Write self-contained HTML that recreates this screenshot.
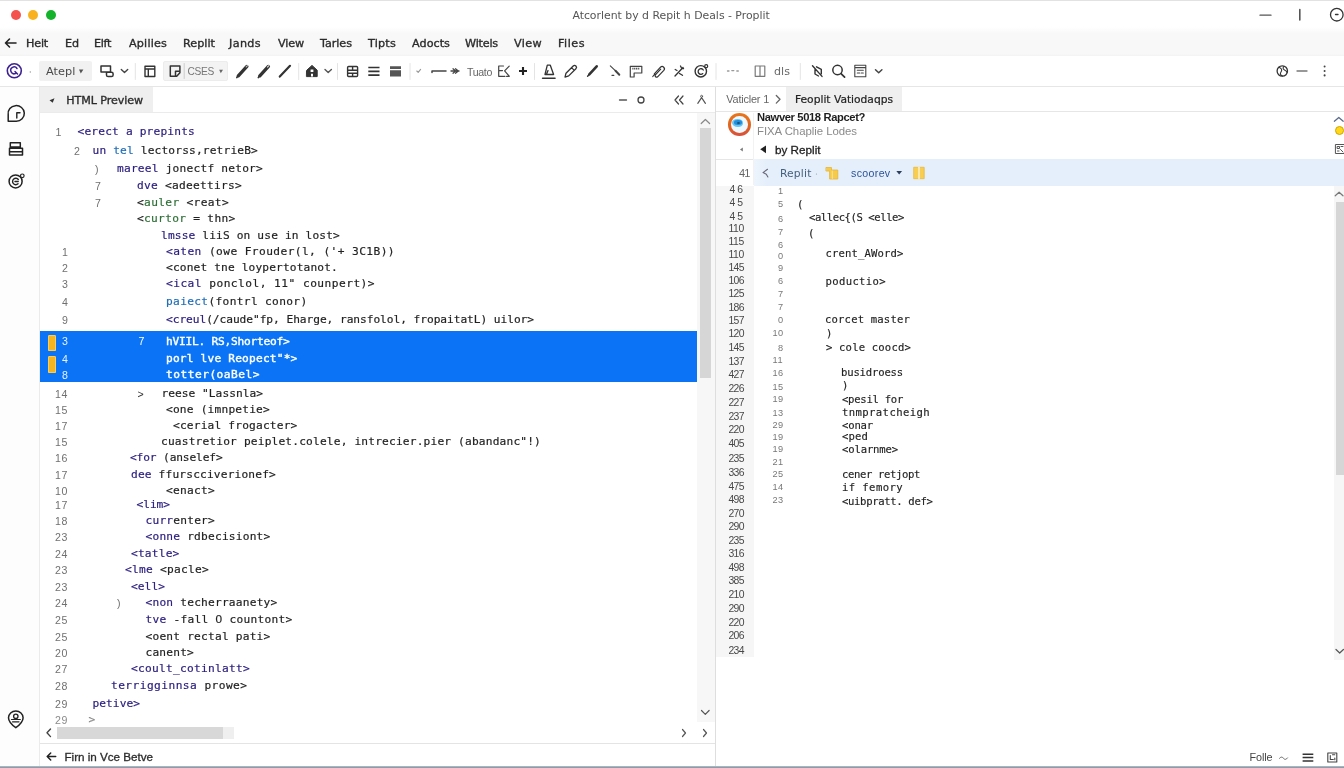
<!DOCTYPE html>
<html lang="en"><head><meta charset="utf-8"><title>Atcorlent by d Repit h Deals - Proplit</title>
<style>
*{box-sizing:border-box;margin:0;padding:0}
html,body{width:1344px;height:768px;overflow:hidden;background:#fff}
body{position:relative;font-family:"Liberation Sans","DejaVu Sans",sans-serif}
.a{position:absolute}
.t{position:absolute;white-space:pre;}
svg{position:absolute;overflow:visible}
.ic{fill:none;stroke:#333;stroke-width:1.4;stroke-linecap:round;stroke-linejoin:round}
</style></head><body>
<!-- title bar -->
<div class="a" style="left:0;top:0;width:1344px;height:30px;background:#fff"></div>
<div class="a" style="left:10.5px;top:10px;width:10px;height:10px;border-radius:50%;background:#f4524d"></div>
<div class="a" style="left:28px;top:10px;width:10px;height:10px;border-radius:50%;background:#f9b21d"></div>
<div class="a" style="left:46px;top:10px;width:10px;height:10px;border-radius:50%;background:#14b32c"></div>
<!-- menu bar -->
<div class="a" style="left:0;top:27px;width:1344px;height:29px;background:linear-gradient(#fff,#f8f8f8 22%,#f8f8f8 92%,#f3f3f3)"></div>
<div class="a" style="left:0;top:0;width:1344px;height:1px;background:#e2e2e2"></div>
<!-- toolbar -->
<div class="a" style="left:0;top:56px;width:1344px;height:31px;background:#fff;border-bottom:1px solid #e6e6e6"></div>
<div class="a" style="left:39px;top:61px;width:53px;height:20px;background:#f1f1f1;border-radius:2px"></div>
<div class="a" style="left:163px;top:61px;width:65px;height:20px;background:#f3f3f3;border:1px solid #ececec;border-radius:2px"></div>
<!-- sidebar -->
<div class="a" style="left:0;top:87px;width:40px;height:681px;background:#fdfdfd;border-right:1px solid #ebebeb"></div>
<!-- left tab bar -->
<div class="a" style="left:40px;top:87px;width:676px;height:26px;background:#fff;border-bottom:1px solid #ebebeb"></div>
<div class="a" style="left:40px;top:87px;width:113px;height:25px;background:#efefef"></div>
<!-- editor selection -->
<div class="a" style="left:40px;top:330.800px;width:656.700px;height:51px;background:#0b74f6"></div>
<div class="a" style="left:48.200px;top:334.600px;width:8.100px;height:16.700px;background:#f5b521;border-radius:1.500px;box-shadow:inset 0 0 0 0.800px #fbd56c"></div>
<div class="a" style="left:48.200px;top:355.800px;width:8.100px;height:17.400px;background:#f5b521;border-radius:1.500px;box-shadow:inset 0 0 0 0.800px #fbd56c"></div>
<!-- left v scrollbar -->
<div class="a" style="left:696.500px;top:113px;width:18.500px;height:609px;background:#f7f7f7"></div>
<div class="a" style="left:700px;top:128px;width:10.5px;height:250px;background:#d6d6d6"></div>
<!-- left h scrollbar -->
<div class="a" style="left:40px;top:723px;width:675px;height:21px;background:#fff;border-bottom:1px solid #e4e4e4"></div>
<div class="a" style="left:57px;top:727px;width:177px;height:12px;background:#efefef"></div>
<div class="a" style="left:57px;top:727px;width:166px;height:12px;background:#d8d8d8"></div>
<!-- divider -->
<div class="a" style="left:715px;top:87px;width:1px;height:679px;background:#dedede"></div>
<!-- right tab bar -->
<div class="a" style="left:716px;top:87px;width:628px;height:25px;background:#fff;border-bottom:1px solid #e6e6e6"></div>
<div class="a" style="left:786px;top:87px;width:116px;height:24px;background:#efefef"></div>
<!-- right header -->
<div class="a" style="left:716px;top:159px;width:38px;height:1px;background:#e6e6e6"></div>
<div class="a" style="left:754px;top:159.300px;width:590px;height:26.400px;background:linear-gradient(90deg,#edf4fc,#e5effb 12px)"></div>
<div class="a" style="left:716px;top:185.700px;width:38px;height:471px;background:#f6f6f6"></div>
<div class="a" style="left:753px;top:113px;width:1px;height:72px;background:#f2f2f2"></div>
<!-- avatar -->
<div class="a" style="left:728px;top:113px;width:22.600px;height:22.600px;border-radius:50%;background:linear-gradient(#e9781c,#e0651f 55%,#d84f3c)"></div>
<div class="a" style="left:731px;top:116px;width:16.600px;height:16.600px;border-radius:50%;background:#eef8fd"></div>
<div class="a" style="left:732px;top:118.500px;width:11px;height:8px;border-radius:50% 50% 45% 55%;background:#6cc3ef"></div>
<div class="a" style="left:733.500px;top:120px;width:8.500px;height:5px;border-radius:45%;background:#1f8edb"></div>
<div class="a" style="left:736.500px;top:121.500px;width:3.500px;height:2.500px;border-radius:40%;background:#1b4f78"></div>
<!-- right scrollbar -->
<div class="a" style="left:1334px;top:186px;width:10px;height:474px;background:#f6f6f6"></div>
<div class="a" style="left:1335.5px;top:202px;width:9px;height:273px;background:#d6d6d6"></div>
<div class="a" style="left:1334.6px;top:126.1px;width:9.3px;height:9.3px;border-radius:50%;background:#ffd81c;border:1px solid #d0a600"></div>
<!-- bottom edge -->
<div class="a" style="left:0;top:766px;width:1344px;height:2px;background:linear-gradient(#b4c2cc,#7f919f)"></div>
<svg class="ic" style="left:0;top:0" width="1344" height="768" viewBox="0 0 1344 768">
<!-- window controls -->
<g stroke="#555" stroke-width="1.3">
<path d="M1260 15.2H1271"/><path d="M1299.8 9.5V20" stroke-width="1.6"/>
<circle cx="1336.8" cy="14.7" r="6.3" stroke="#333"/><path d="M1335.5 14.5h2.5" stroke="#333"/>
</g>
<!-- menu back arrow -->
<path d="M5.5 43H16M9.5 39L5.5 43L9.5 47" stroke="#222" stroke-width="1.6"/>
<!-- toolbar: purple circle -->
<circle cx="14.3" cy="70.8" r="7" stroke="#3d2391" stroke-width="1.6"/>
<path d="M17 68.5a3.4 3.4 0 1 0 -1.5 5M15 71.5l2.5 2.5" stroke="#3d2391" stroke-width="1.5"/>
<circle cx="30.3" cy="72" r="0.7" fill="#999" stroke="none"/>
<!-- Atepl caret -->
<path d="M79 69.5h4.4l-2.6 4z" fill="#555" stroke="none"/>
<!-- overlapping shapes icon -->
<path d="M101 66h9.5v6H101z M106.5 72.2h5a1.6 1.6 0 0 1 1.6 1.6v1.2a1.6 1.6 0 0 1 -1.6 1.6h-3.4a1.6 1.6 0 0 1 -1.6 -1.6z" stroke="#333" stroke-width="1.5"/>
<path d="M121.3 69.6l3.2 3l3.2-3" stroke="#444" stroke-width="1.4"/>
<path d="M135.3 63.5v16" stroke="#e4e4e4" stroke-width="1"/>
<!-- window icon -->
<path d="M145 66.3h9.8v10.2H145z M145 69h9.8 M148.3 69v7.5" stroke="#333" stroke-width="1.4"/>
<!-- CSES icon -->
<path d="M170.3 66h9.6v6.8l-3.2 3.4h-6.4z M179.9 71.3h-4.4v4.9" stroke="#333" stroke-width="1.5"/>
<path d="M184.2 63.5v15" stroke="#ccc" stroke-width="1"/>
<path d="M219.2 69.7h3.8l-2.2 3.6z" fill="#666" stroke="none"/>
<!-- pens -->
<path d="M238.3 75.8l8.6-9.4" stroke="#333" stroke-width="3.3"/><path d="M236.8 77.6l1-1.6" stroke="#333" stroke-width="1.6"/>
<path d="M246.2 66.9l1.3-1.3" stroke="#bbb" stroke-width="1.2"/>
<path d="M259.8 75.8l8.6-9.4" stroke="#333" stroke-width="3.3"/><path d="M258.3 77.6l1-1.6" stroke="#333" stroke-width="1.6"/>
<path d="M267.5 67l1.4-1.4" stroke="#ccc" stroke-width="1.2"/>
<path d="M279.8 76.6l10.2-10.8" stroke="#333" stroke-width="2.2"/>
<path d="M298.7 63.5v16" stroke="#e4e4e4" stroke-width="1"/>
<!-- house -->
<path d="M306.8 70.2l5.2-4.8l5.2 4.800v6.4h-10.4z" fill="#333" stroke="#333" stroke-width="1"/>
<path d="M310.6 69.5h2.8v2.4h-2.800z M311 73.800h2v2.800h-2z" fill="#fff" stroke="none"/>
<path d="M325 69.600l3.200 3l3.200-3" stroke="#555" stroke-width="1.400"/>
<path d="M337.500 63.500v16" stroke="#e4e4e4" stroke-width="1"/>
<!-- save-like icon -->
<path d="M347.600 67.500a1 1 0 0 1 1-1h8a1 1 0 0 1 1 1v8a1 1 0 0 1 -1 1h-8a1 1 0 0 1 -1-1z M347.600 70.200h10 M347.600 73.300h10 M352.600 66.500v3.700 M352.600 73.300v3.200" stroke="#333" stroke-width="1.400"/>
<!-- lines icon -->
<path d="M368.300 67.500h11.200 M368.300 71.300h11.200 M368.300 75.200h11.200" stroke="#333" stroke-width="1.700" stroke-linecap="butt"/>
<!-- filled rect icon -->
<path d="M390 66.300h11v2.600h-11z M390 70.300h11v6.200h-11z" fill="#555" stroke="none"/>
<path d="M410 63.500v16" stroke="#e4e4e4" stroke-width="1"/>
<path d="M416.800 71l1.400 1.400l2.400-3" stroke="#999" stroke-width="1.100"/>
<path d="M432 72.500v-1.500h14" stroke="#444" stroke-width="1.500"/>
<path d="M451 71h8 M455.500 68.800l2.800 2.200l-2.800 2.200 M453 68.800l2.800 2.200l-2.800 2.200" stroke="#444" stroke-width="1.300"/>
<!-- E< icon -->
<path d="M503.500 66h-4.800v10.300h4.200 M498.700 70.600h3.800 M509.200 66.200l-4.600 4.600l4.600 5.400 M503.500 76.300h1.500 M506.500 76.300h2.800" stroke="#444" stroke-width="1.200"/>
<!-- plus -->
<path d="M519 71h8 M523 67v8" stroke="#222" stroke-width="2.100" stroke-linecap="butt"/>
<path d="M534.500 63.500v16" stroke="#e4e4e4" stroke-width="1"/>
<!-- highlighter A -->
<path d="M547.300 65.200h3l3.300 9.300h-8.600z M548 70.500l-1.600 4" stroke="#333" stroke-width="1.300"/>
<path d="M542.600 78.200h12.400" stroke="#333" stroke-width="1.600"/>
<!-- outline pencil -->
<path d="M566 73.200l7.200-7.200a1.900 1.900 0 0 1 2.700 2.700l-7.200 7.200l-3.700 1.200z M571.500 67.600l2.800 2.800" stroke="#333" stroke-width="1.300"/>
<!-- brush -->
<path d="M589.300 74.300l7.400-8" stroke="#333" stroke-width="2.600"/><path d="M587.600 76.300l1.400-1.600" stroke="#333" stroke-width="1.400"/>
<!-- thin diag -->
<path d="M610.300 65.800l5.500 5.300" stroke="#444" stroke-width="1.100"/><path d="M615.500 70.800l3.800 4" stroke="#444" stroke-width="2"/>
<path d="M612 75.300h1.800" stroke="#444" stroke-width="1.300"/>
<!-- flag -->
<path d="M630.300 77v-10.700h11.500v6.700h-7.700v4z" stroke="#444" stroke-width="1.200"/>
<path d="M632.300 68.700h7.500" stroke="#555" stroke-width="1.800" stroke-dasharray="1.200 0.600" stroke-linecap="butt"/>
<!-- clip -->
<path d="M654.300 73.800l6.200-6.600a2.300 2.300 0 0 1 3.300 3.200l-6.200 6.400a1.500 1.500 0 0 1 -2.200-2l5.300-5.600 M652.800 76.500l2-2.500" stroke="#333" stroke-width="1.200"/>
<!-- wand -->
<path d="M675 76l8-8.500 M680.500 66l1 2l2 0.500 M677 70.500l-1.800-1 M679.500 73.500l3 1.800" stroke="#333" stroke-width="1.300"/>
<!-- @ spiral -->
<circle cx="700.800" cy="71.300" r="5.700" stroke="#333" stroke-width="1.400"/>
<path d="M703.300 70a2.800 2.800 0 1 0 -0.500 3.600" stroke="#333" stroke-width="1.300"/>
<circle cx="706.200" cy="66.200" r="1.500" stroke="#333" stroke-width="1.200"/>
<path d="M716 63.500v16" stroke="#e4e4e4" stroke-width="1"/>
<!-- dots -->
<path d="M727.500 71h1.500 M731.800 70.600h2 M736.800 71h1.500" stroke="#999" stroke-width="1.300"/>
<!-- [] icon -->
<path d="M755.200 66h9.600v10.300h-9.600z M760 66v10.300" stroke="#7a7a7a" stroke-width="1.200"/>
<path d="M800.300 63.500v16" stroke="#e4e4e4" stroke-width="1"/>
<!-- crossed icon -->
<path d="M812.500 65.800l9.500 10.600 M815 69.500v4.500l3.500 2 M816.500 66.800l4.800 2.500v4.500" stroke="#333" stroke-width="1.400"/>
<!-- search -->
<circle cx="837.500" cy="70" r="4.700" stroke="#333" stroke-width="1.500"/><path d="M841 73.600l3.600 3.600" stroke="#333" stroke-width="1.700"/>
<!-- box icon -->
<path d="M854.800 65.300h11v11.400h-11z M854.800 67.600h11 M857.300 70.300h6 M857.300 73h2.500 M861.300 73h2" stroke="#444" stroke-width="1.100"/>
<path d="M875.500 69.800l3.200 3l3.200-3" stroke="#444" stroke-width="1.500"/>
<!-- toolbar right -->
<circle cx="1282.300" cy="71" r="5.200" stroke="#333" stroke-width="1.300"/>
<path d="M1279.500 67.500c2 1 3 2.500 1.500 4.500s0 3.500 1.500 4 M1284 66.300c-1.500 1.500-1 3 0.500 3.700s2.500 1.500 2.500 2.500" stroke="#333" stroke-width="1.100"/>
<path d="M1297 71h10" stroke="#777" stroke-width="1.300"/>
<path d="M1324.600 66.500v0.100 M1324.600 71v0.100 M1324.600 75.300v0.100" stroke="#444" stroke-width="2"/>
<!-- sidebar icons -->
<path d="M8.2 121.2v-6.7a8.1 7.8 0 1 1 8.1 6.7z" stroke="#222" stroke-width="1.5"/>
<path d="M16.800 118v-5.300h3.200" stroke="#222" stroke-width="1.400"/>
<path d="M10.300 142.700h10v4.300h-10z M9.500 148.300h13v6.800h-13z M9.500 151.700h13" stroke="#222" stroke-width="1.500"/>
<circle cx="15.600" cy="181.400" r="6.500" stroke="#222" stroke-width="1.500"/>
<path d="M18.300 179.500a3.200 3.200 0 1 0 -0.300 4.300 M15 181.500h3.200" stroke="#222" stroke-width="1.400"/>
<circle cx="22.300" cy="175.800" r="1.800" stroke="#222" stroke-width="1.200" fill="#fdfdfd"/>
<!-- pin icon -->
<path d="M15.800 727.700c-4.500-3.300-7.300-6.300-7.300-10a7.300 6.700 0 0 1 14.600 0c0 3.700-2.800 6.700-7.300 10z" stroke="#222" stroke-width="1.500"/>
<circle cx="15.800" cy="716.300" r="2.200" stroke="#222" stroke-width="1.300"/>
<path d="M11.500 719.500h8.800 M12.500 721.800h6.500" stroke="#222" stroke-width="1.200"/>
<!-- tab arrow -->
<path d="M49.500 100.200l5-2l-1.800 4.600z" fill="#333" stroke="none"/>
<!-- left tab bar controls -->
<path d="M619.500 100h7" stroke="#555" stroke-width="1.300"/>
<circle cx="641" cy="100" r="3" stroke="#444" stroke-width="1.300"/>
<path d="M678.500 96l-3.500 4l3.500 4 M683 96l-3.500 4l3.500 4" stroke="#444" stroke-width="1.200"/>
<path d="M697.8 103.300l3.800-5.600l3.800 5.600" stroke="#555" stroke-width="1.200"/><circle cx="701.600" cy="96.300" r="1" stroke="#555" stroke-width="0.900"/>
<!-- left scroll arrows -->
<path d="M701.200 123.500l4.200-4l4.200 4" stroke="#888" stroke-width="1.200"/>
<path d="M701.500 710.500l3.800 3.800l3.800-3.800" stroke="#555" stroke-width="1.200"/>
<path d="M50.500 729l-3.500 3.800l3.500 3.800" stroke="#444" stroke-width="1.400"/>
<path d="M682.500 729.500l3 3.500l-3 3.500" stroke="#555" stroke-width="1.200"/>
<path d="M703.500 729.500l3 3.500l-3 3.500" stroke="#555" stroke-width="1.200"/>
<!-- status arrow -->
<path d="M47.200 756.500h8.500 M50.700 753l-3.500 3.500l3.500 3.500" stroke="#222" stroke-width="1.500"/>
<!-- right tab chevron -->
<path d="M776.300 95.500l3.700 3.800l-3.700 3.800" stroke="#666" stroke-width="1.300"/>
<!-- by replit arrows -->
<path d="M766 145.400v7.800l-5.800-3.900z" fill="#222" stroke="none"/>
<path d="M742.800 147.600v3.800l-2.800-1.900z" fill="#777" stroke="none"/>
<!-- blue row -->
<path d="M767.5 169.300l-4.500 3.300l3.300 1.600l1.600 2.800" stroke="#667" stroke-width="1.100"/>
<circle cx="816.500" cy="174" r="0.600" fill="#99a" stroke="none"/>
<path d="M826.300 167.500h5.200v2.500h6.300v9h-8.200v-8h-3.300z" fill="#f6cb4c" stroke="#e6b535" stroke-width="0.800"/><path d="M832.300 171v7.500" stroke="#fbe39a" stroke-width="1"/>
<path d="M896.300 171h5.800l-2.900 3.400z" fill="#2b3f60" stroke="none"/>
<path d="M914 167.300h10.200v11.400h-10.200z" fill="#f7cd52" stroke="#e8b93a" stroke-width="0.800"/>
<path d="M919 167.300v11.400" stroke="#fff4d0" stroke-width="1.400"/>
<!-- right side -->
<path d="M1334.400 121.200l4.400-3.700l4.400 3.700" stroke="#5a6b8a" stroke-width="1.300"/>
<path d="M1335.800 144.500h9v9h-9z M1337.500 146.500h2v2h-2z M1341 146.500h2 M1337.500 151h1.500 M1340.500 149.500l2.500 2.500" stroke="#555" stroke-width="1"/>
<path d="M1335.200 195.800l3.900-3.600l3.900 3.600" stroke="#777" stroke-width="1.200"/>
<path d="M1336 649.500l3.700 3.500l3.700-3.500" stroke="#555" stroke-width="1.200"/>
<!-- status right -->
<path d="M1279.500 758.300c1.300-1.600 2.600-1.600 4 0s2.700 1.400 4-0.400" stroke="#666" stroke-width="1"/>
<path d="M1302.600 754.200h10.700 M1302.600 757.600h10.700 M1302.600 761h10.700" stroke="#333" stroke-width="1.500" stroke-linecap="butt"/>
<path d="M1327.800 753h9v9h-9z M1330.300 755.500v4h3 M1332.500 754.800h2.300 M1334.800 758v1.800" stroke="#444" stroke-width="1.100"/>
</svg>

<div class="a" style="left:0;top:0;width:1344px;height:768px;will-change:transform">
<div class="t" id="t0" style="left:572.4px;top:7.9px;font:400 10.9px/16px 'DejaVu Sans','Liberation Sans',sans-serif;color:#555;letter-spacing:-0.012px;">Atcorlent by d Repit h Deals - Proplit</div>
<div class="t" id="t1" style="left:26.0px;top:35.9px;font:400 11.2px/16px 'DejaVu Sans','Liberation Sans',sans-serif;color:#2b2b2b;letter-spacing:-0.199px;-webkit-text-stroke:0.35px #2b2b2b;">Heit</div>
<div class="t" id="t2" style="left:65.0px;top:35.9px;font:400 11.2px/16px 'DejaVu Sans','Liberation Sans',sans-serif;color:#2b2b2b;letter-spacing:-0.086px;-webkit-text-stroke:0.35px #2b2b2b;">Ed</div>
<div class="t" id="t3" style="left:94.0px;top:35.9px;font:400 11.2px/16px 'DejaVu Sans','Liberation Sans',sans-serif;color:#2b2b2b;letter-spacing:-0.328px;-webkit-text-stroke:0.35px #2b2b2b;">Elft</div>
<div class="t" id="t4" style="left:129.0px;top:35.9px;font:400 11.2px/16px 'DejaVu Sans','Liberation Sans',sans-serif;color:#2b2b2b;letter-spacing:0.172px;-webkit-text-stroke:0.35px #2b2b2b;">Apilies</div>
<div class="t" id="t5" style="left:183.0px;top:35.9px;font:400 11.2px/16px 'DejaVu Sans','Liberation Sans',sans-serif;color:#2b2b2b;letter-spacing:0.023px;-webkit-text-stroke:0.35px #2b2b2b;">Replit</div>
<div class="t" id="t6" style="left:229.0px;top:35.9px;font:400 11.2px/16px 'DejaVu Sans','Liberation Sans',sans-serif;color:#2b2b2b;letter-spacing:0.362px;-webkit-text-stroke:0.35px #2b2b2b;">Jands</div>
<div class="t" id="t7" style="left:278.0px;top:35.9px;font:400 11.2px/16px 'DejaVu Sans','Liberation Sans',sans-serif;color:#2b2b2b;letter-spacing:-0.141px;-webkit-text-stroke:0.35px #2b2b2b;">View</div>
<div class="t" id="t8" style="left:320.0px;top:35.9px;font:400 11.2px/16px 'DejaVu Sans','Liberation Sans',sans-serif;color:#2b2b2b;letter-spacing:-0.044px;-webkit-text-stroke:0.35px #2b2b2b;">Tarles</div>
<div class="t" id="t9" style="left:368.0px;top:35.9px;font:400 11.2px/16px 'DejaVu Sans','Liberation Sans',sans-serif;color:#2b2b2b;letter-spacing:0.216px;-webkit-text-stroke:0.35px #2b2b2b;">Tipts</div>
<div class="t" id="t10" style="left:412.0px;top:35.9px;font:400 11.2px/16px 'DejaVu Sans','Liberation Sans',sans-serif;color:#2b2b2b;letter-spacing:0.036px;-webkit-text-stroke:0.35px #2b2b2b;">Adocts</div>
<div class="t" id="t11" style="left:465.0px;top:35.9px;font:400 11.2px/16px 'DejaVu Sans','Liberation Sans',sans-serif;color:#2b2b2b;letter-spacing:-0.190px;-webkit-text-stroke:0.35px #2b2b2b;">Witels</div>
<div class="t" id="t12" style="left:514.0px;top:35.9px;font:400 11.2px/16px 'DejaVu Sans','Liberation Sans',sans-serif;color:#2b2b2b;letter-spacing:0.359px;-webkit-text-stroke:0.35px #2b2b2b;">View</div>
<div class="t" id="t13" style="left:558.0px;top:35.9px;font:400 11.2px/16px 'DejaVu Sans','Liberation Sans',sans-serif;color:#2b2b2b;letter-spacing:0.487px;-webkit-text-stroke:0.35px #2b2b2b;">Files</div>
<div class="t" id="t14" style="left:46.0px;top:63.5px;font:400 11.3px/16px 'DejaVu Sans','Liberation Sans',sans-serif;color:#4a4a4a;letter-spacing:0.056px;">Atepl</div>
<div class="t" id="t15" style="left:187.5px;top:63.9px;font:400 10.2px/16px 'Liberation Sans','DejaVu Sans',sans-serif;color:#777;letter-spacing:-0.312px;">CSES</div>
<div class="t" id="t16" style="left:467.0px;top:63.7px;font:400 10.6px/16px 'Liberation Sans','DejaVu Sans',sans-serif;color:#666;letter-spacing:-0.341px;">Tuato</div>
<div class="t" id="t17" style="left:774.0px;top:63.5px;font:400 11.1px/16px 'DejaVu Sans','Liberation Sans',sans-serif;color:#6a6a6a;letter-spacing:0.031px;">dls</div>
<div class="t" id="t18" style="left:66.2px;top:92.7px;font:400 11.1px/16px 'DejaVu Sans','Liberation Sans',sans-serif;color:#2b2b2b;letter-spacing:-0.066px;-webkit-text-stroke:0.35px #2b2b2b;">HTML Preview</div>
<div class="t" id="t19" style="left:726.3px;top:90.9px;font:400 10.9px/16px 'Liberation Sans','DejaVu Sans',sans-serif;color:#666;letter-spacing:-0.189px;">Vaticler 1</div>
<div class="t" id="t20" style="left:795.0px;top:91.5px;font:400 10.7px/16px 'DejaVu Sans','Liberation Sans',sans-serif;color:#222;letter-spacing:-0.010px;-webkit-text-stroke:0.2px;">Feoplit Vatiodaqps</div>
<div class="t" id="t21" style="left:757.0px;top:109.3px;font:700 11.2px/16px 'Liberation Sans','DejaVu Sans',sans-serif;color:#1d1d1d;letter-spacing:-0.371px;">Nawver 5018 Rapcet?</div>
<div class="t" id="t22" style="left:757.0px;top:123.1px;font:400 11.4px/16px 'Liberation Sans','DejaVu Sans',sans-serif;color:#8a8a8a;letter-spacing:-0.038px;">FIXA Chaplie Lodes</div>
<div class="t" id="t23" style="left:775.0px;top:142.4px;font:400 11.7px/16px 'Liberation Sans','DejaVu Sans',sans-serif;color:#222;letter-spacing:0.002px;-webkit-text-stroke:0.3px;">by Replit</div>
<div class="t" id="t24" style="left:739.0px;top:165.2px;font:400 11px/16px 'Liberation Sans','DejaVu Sans',sans-serif;color:#666;letter-spacing:-0.875px;">41</div>
<div class="t" id="t25" style="left:780.0px;top:165.5px;font:400 10.7px/16px 'DejaVu Sans','Liberation Sans',sans-serif;color:#44607f;letter-spacing:0.177px;">Replit</div>
<div class="t" id="t26" style="left:851.0px;top:165.1px;font:400 10.6px/16px 'Liberation Sans','DejaVu Sans',sans-serif;color:#2b5299;letter-spacing:0.344px;">scoorev</div>
<div class="t" id="t27" style="left:64.5px;top:749.1px;font:400 11.7px/16px 'Liberation Sans','DejaVu Sans',sans-serif;color:#2b2b2b;letter-spacing:-0.029px;-webkit-text-stroke:0.3px;">Firn in Vce Betve</div>
<div class="t" id="t28" style="left:1249.5px;top:749.3px;font:400 10.8px/16px 'Liberation Sans','DejaVu Sans',sans-serif;color:#444;letter-spacing:-0.081px;">Folle</div>
<div class="t" id="t29" style="left:55.5px;top:124.2px;font:400 10.6px/16px 'Liberation Sans','DejaVu Sans',sans-serif;color:#707070;letter-spacing:0.000px;">1</div>
<div class="t" id="t30" style="left:77.5px;top:124.2px;font:400 11.2px/16px 'DejaVu Sans Mono','Liberation Mono',monospace;color:#222;letter-spacing:0.176px;-webkit-text-stroke:0.18px;"><span style="color:#2d2080">&lt;erect a prepints</span></div>
<div class="t" id="t31" style="left:74.0px;top:142.7px;font:400 10.6px/16px 'Liberation Sans','DejaVu Sans',sans-serif;color:#707070;letter-spacing:0.000px;">2</div>
<div class="t" id="t32" style="left:92.5px;top:142.7px;font:400 11.2px/16px 'DejaVu Sans Mono','Liberation Mono',monospace;color:#222;letter-spacing:0.159px;-webkit-text-stroke:0.18px;"><span style="color:#2d2080">un </span><span style="color:#1f6eb8">tel</span><span style="color:#222"> lectorss,retrieB&gt;</span></div>
<div class="t" id="t33" style="left:95.0px;top:160.7px;font:400 10.6px/16px 'Liberation Sans','DejaVu Sans',sans-serif;color:#707070;letter-spacing:0.000px;">)</div>
<div class="t" id="t34" style="left:117.0px;top:160.7px;font:400 11.2px/16px 'DejaVu Sans Mono','Liberation Mono',monospace;color:#222;letter-spacing:0.217px;-webkit-text-stroke:0.18px;"><span style="color:#2d2080">mareel </span><span style="color:#222">jonectf netor&gt;</span></div>
<div class="t" id="t35" style="left:95.0px;top:177.7px;font:400 10.6px/16px 'Liberation Sans','DejaVu Sans',sans-serif;color:#707070;letter-spacing:0.000px;">7</div>
<div class="t" id="t36" style="left:137.0px;top:177.7px;font:400 11.2px/16px 'DejaVu Sans Mono','Liberation Mono',monospace;color:#222;letter-spacing:0.264px;-webkit-text-stroke:0.18px;"><span style="color:#2d2080">dve</span><span style="color:#222"> &lt;adeettirs&gt;</span></div>
<div class="t" id="t37" style="left:95.0px;top:194.7px;font:400 10.6px/16px 'Liberation Sans','DejaVu Sans',sans-serif;color:#707070;letter-spacing:0.000px;">7</div>
<div class="t" id="t38" style="left:137.0px;top:194.7px;font:400 11.2px/16px 'DejaVu Sans Mono','Liberation Mono',monospace;color:#222;letter-spacing:0.339px;-webkit-text-stroke:0.18px;"><span style="color:#222">&lt;</span><span style="color:#2f7038">auler</span><span style="color:#222"> &lt;reat&gt;</span></div>
<div class="t" id="t39" style="left:137.0px;top:210.7px;font:400 11.2px/16px 'DejaVu Sans Mono','Liberation Mono',monospace;color:#222;letter-spacing:0.298px;-webkit-text-stroke:0.18px;"><span style="color:#222">&lt;</span><span style="color:#2f7038">curtor</span><span style="color:#222"> = thn&gt;</span></div>
<div class="t" id="t40" style="left:161.0px;top:227.7px;font:400 11.2px/16px 'DejaVu Sans Mono','Liberation Mono',monospace;color:#222;letter-spacing:0.148px;-webkit-text-stroke:0.18px;"><span style="color:#2d2080">lmsse</span><span style="color:#222"> liiS on use in lost&gt;</span></div>
<div class="t" id="t41" style="left:62.0px;top:243.7px;font:400 10.6px/16px 'Liberation Sans','DejaVu Sans',sans-serif;color:#707070;letter-spacing:0.000px;">1</div>
<div class="t" id="t42" style="left:166.0px;top:243.7px;font:400 11.2px/16px 'DejaVu Sans Mono','Liberation Mono',monospace;color:#222;letter-spacing:0.420px;-webkit-text-stroke:0.18px;"><span style="color:#2d2080">&lt;aten</span><span style="color:#222"> (owe Frouder(l, (&#x27;+ 3C1B))</span></div>
<div class="t" id="t43" style="left:62.0px;top:259.7px;font:400 10.6px/16px 'Liberation Sans','DejaVu Sans',sans-serif;color:#707070;letter-spacing:0.000px;">2</div>
<div class="t" id="t44" style="left:166.0px;top:259.7px;font:400 11.2px/16px 'DejaVu Sans Mono','Liberation Mono',monospace;color:#222;letter-spacing:0.144px;-webkit-text-stroke:0.18px;">&lt;conet tne loypertotanot.</div>
<div class="t" id="t45" style="left:62.0px;top:275.7px;font:400 10.6px/16px 'Liberation Sans','DejaVu Sans',sans-serif;color:#707070;letter-spacing:0.000px;">3</div>
<div class="t" id="t46" style="left:166.0px;top:275.7px;font:400 11.2px/16px 'DejaVu Sans Mono','Liberation Mono',monospace;color:#222;letter-spacing:0.471px;-webkit-text-stroke:0.18px;"><span style="color:#2d2080">&lt;ical</span><span style="color:#222"> ponclol, 11&quot; counpert)&gt;</span></div>
<div class="t" id="t47" style="left:62.0px;top:293.7px;font:400 10.6px/16px 'Liberation Sans','DejaVu Sans',sans-serif;color:#707070;letter-spacing:0.000px;">4</div>
<div class="t" id="t48" style="left:166.0px;top:293.9px;font:400 11.2px/16px 'DejaVu Sans Mono','Liberation Mono',monospace;color:#222;letter-spacing:0.339px;-webkit-text-stroke:0.18px;"><span style="color:#1f6eb8">paiect</span><span style="color:#222">(fontrl conor)</span></div>
<div class="t" id="t49" style="left:62.0px;top:311.7px;font:400 10.6px/16px 'Liberation Sans','DejaVu Sans',sans-serif;color:#707070;letter-spacing:0.000px;">9</div>
<div class="t" id="t50" style="left:166.0px;top:311.7px;font:400 11.2px/16px 'DejaVu Sans Mono','Liberation Mono',monospace;color:#222;letter-spacing:-0.045px;-webkit-text-stroke:0.18px;"><span style="color:#2d2080">&lt;creul</span><span style="color:#222">(/caude&quot;fp, Eharge, ransfolol, fropaitatL) uilor&gt;</span></div>
<div class="t" id="t51" style="left:62.0px;top:332.9px;font:400 10.6px/16px 'Liberation Sans','DejaVu Sans',sans-serif;color:#e8f0ff;letter-spacing:0.000px;">3</div>
<div class="t" id="t52" style="left:138.5px;top:333.4px;font:400 10.6px/16px 'Liberation Sans','DejaVu Sans',sans-serif;color:#fff;letter-spacing:0.000px;">7</div>
<div class="t" id="t53" style="left:166.0px;top:333.7px;font:400 11.2px/16px 'DejaVu Sans Mono','Liberation Mono',monospace;color:#fff;letter-spacing:-0.236px;-webkit-text-stroke:0.4px;">hVIIL. RS,Shorteof&gt;</div>
<div class="t" id="t54" style="left:62.0px;top:351.2px;font:400 10.6px/16px 'Liberation Sans','DejaVu Sans',sans-serif;color:#e8f0ff;letter-spacing:0.000px;">4</div>
<div class="t" id="t55" style="left:166.0px;top:350.7px;font:400 11.2px/16px 'DejaVu Sans Mono','Liberation Mono',monospace;color:#fff;letter-spacing:0.185px;-webkit-text-stroke:0.4px;">porl lve Reopect&quot;*&gt;</div>
<div class="t" id="t56" style="left:62.0px;top:367.0px;font:400 10.6px/16px 'Liberation Sans','DejaVu Sans',sans-serif;color:#e8f0ff;letter-spacing:0.000px;">8</div>
<div class="t" id="t57" style="left:166.0px;top:366.7px;font:400 11.2px/16px 'DejaVu Sans Mono','Liberation Mono',monospace;color:#fff;letter-spacing:0.495px;-webkit-text-stroke:0.4px;">totter(oaBel&gt;</div>
<div class="t" id="t58" style="left:55.0px;top:385.7px;font:400 10.6px/16px 'Liberation Sans','DejaVu Sans',sans-serif;color:#707070;letter-spacing:0.602px;">14</div>
<div class="t" id="t59" style="left:137.5px;top:385.7px;font:400 10.6px/16px 'Liberation Sans','DejaVu Sans',sans-serif;color:#333;letter-spacing:0.000px;">&gt;</div>
<div class="t" id="t60" style="left:161.5px;top:385.7px;font:400 11.2px/16px 'DejaVu Sans Mono','Liberation Mono',monospace;color:#222;letter-spacing:0.030px;-webkit-text-stroke:0.18px;">reese &quot;Lassnla&gt;</div>
<div class="t" id="t61" style="left:55.0px;top:402.2px;font:400 10.6px/16px 'Liberation Sans','DejaVu Sans',sans-serif;color:#707070;letter-spacing:0.602px;">15</div>
<div class="t" id="t62" style="left:166.0px;top:402.2px;font:400 11.2px/16px 'DejaVu Sans Mono','Liberation Mono',monospace;color:#222;letter-spacing:0.197px;-webkit-text-stroke:0.18px;">&lt;one (imnpetie&gt;</div>
<div class="t" id="t63" style="left:55.0px;top:418.2px;font:400 10.6px/16px 'Liberation Sans','DejaVu Sans',sans-serif;color:#707070;letter-spacing:0.602px;">17</div>
<div class="t" id="t64" style="left:173.0px;top:418.2px;font:400 11.2px/16px 'DejaVu Sans Mono','Liberation Mono',monospace;color:#222;letter-spacing:0.181px;-webkit-text-stroke:0.18px;">&lt;cerial frogacter&gt;</div>
<div class="t" id="t65" style="left:55.0px;top:433.7px;font:400 10.6px/16px 'Liberation Sans','DejaVu Sans',sans-serif;color:#707070;letter-spacing:0.602px;">15</div>
<div class="t" id="t66" style="left:161.0px;top:433.7px;font:400 11.2px/16px 'DejaVu Sans Mono','Liberation Mono',monospace;color:#222;letter-spacing:0.174px;-webkit-text-stroke:0.18px;">cuastretior peiplet.colele, intrecier.pier (abandanc&quot;!)</div>
<div class="t" id="t67" style="left:55.0px;top:450.2px;font:400 10.6px/16px 'Liberation Sans','DejaVu Sans',sans-serif;color:#707070;letter-spacing:0.602px;">16</div>
<div class="t" id="t68" style="left:130.0px;top:450.2px;font:400 11.2px/16px 'DejaVu Sans Mono','Liberation Mono',monospace;color:#222;letter-spacing:-0.129px;-webkit-text-stroke:0.18px;"><span style="color:#2d2080">&lt;for</span><span style="color:#222"> (anselef&gt;</span></div>
<div class="t" id="t69" style="left:55.0px;top:466.7px;font:400 10.6px/16px 'Liberation Sans','DejaVu Sans',sans-serif;color:#707070;letter-spacing:0.602px;">17</div>
<div class="t" id="t70" style="left:131.0px;top:466.7px;font:400 11.2px/16px 'DejaVu Sans Mono','Liberation Mono',monospace;color:#222;letter-spacing:0.168px;-webkit-text-stroke:0.18px;"><span style="color:#2d2080">dee</span><span style="color:#222"> ffurscciverionef&gt;</span></div>
<div class="t" id="t71" style="left:55.0px;top:482.7px;font:400 10.6px/16px 'Liberation Sans','DejaVu Sans',sans-serif;color:#707070;letter-spacing:0.602px;">10</div>
<div class="t" id="t72" style="left:166.0px;top:482.7px;font:400 11.2px/16px 'DejaVu Sans Mono','Liberation Mono',monospace;color:#222;letter-spacing:0.263px;-webkit-text-stroke:0.18px;">&lt;enact&gt;</div>
<div class="t" id="t73" style="left:55.0px;top:497.2px;font:400 10.6px/16px 'Liberation Sans','DejaVu Sans',sans-serif;color:#707070;letter-spacing:0.602px;">17</div>
<div class="t" id="t74" style="left:136.5px;top:497.2px;font:400 11.2px/16px 'DejaVu Sans Mono','Liberation Mono',monospace;color:#222;letter-spacing:-0.037px;-webkit-text-stroke:0.18px;"><span style="color:#2d2080">&lt;lim&gt;</span></div>
<div class="t" id="t75" style="left:55.0px;top:512.7px;font:400 10.6px/16px 'Liberation Sans','DejaVu Sans',sans-serif;color:#707070;letter-spacing:0.602px;">18</div>
<div class="t" id="t76" style="left:145.5px;top:512.7px;font:400 11.2px/16px 'DejaVu Sans Mono','Liberation Mono',monospace;color:#222;letter-spacing:0.212px;-webkit-text-stroke:0.18px;"><span style="color:#2d2080">curr</span><span style="color:#222">enter&gt;</span></div>
<div class="t" id="t77" style="left:55.0px;top:529.2px;font:400 10.6px/16px 'Liberation Sans','DejaVu Sans',sans-serif;color:#707070;letter-spacing:0.602px;">23</div>
<div class="t" id="t78" style="left:145.5px;top:529.2px;font:400 11.2px/16px 'DejaVu Sans Mono','Liberation Mono',monospace;color:#222;letter-spacing:0.208px;-webkit-text-stroke:0.18px;"><span style="color:#2d2080">&lt;onne</span><span style="color:#222"> rdbecisiont&gt;</span></div>
<div class="t" id="t79" style="left:55.0px;top:545.7px;font:400 10.6px/16px 'Liberation Sans','DejaVu Sans',sans-serif;color:#707070;letter-spacing:0.602px;">24</div>
<div class="t" id="t80" style="left:131.0px;top:545.7px;font:400 11.2px/16px 'DejaVu Sans Mono','Liberation Mono',monospace;color:#222;letter-spacing:0.192px;-webkit-text-stroke:0.18px;"><span style="color:#2d2080">&lt;tatle&gt;</span></div>
<div class="t" id="t81" style="left:55.0px;top:562.2px;font:400 10.6px/16px 'Liberation Sans','DejaVu Sans',sans-serif;color:#707070;letter-spacing:0.602px;">23</div>
<div class="t" id="t82" style="left:125.0px;top:562.2px;font:400 11.2px/16px 'DejaVu Sans Mono','Liberation Mono',monospace;color:#222;letter-spacing:0.263px;-webkit-text-stroke:0.18px;"><span style="color:#2d2080">&lt;lme</span><span style="color:#222"> &lt;pacle&gt;</span></div>
<div class="t" id="t83" style="left:55.0px;top:578.7px;font:400 10.6px/16px 'Liberation Sans','DejaVu Sans',sans-serif;color:#707070;letter-spacing:0.602px;">23</div>
<div class="t" id="t84" style="left:131.0px;top:578.7px;font:400 11.2px/16px 'DejaVu Sans Mono','Liberation Mono',monospace;color:#222;letter-spacing:0.062px;-webkit-text-stroke:0.18px;"><span style="color:#2d2080">&lt;ell&gt;</span></div>
<div class="t" id="t85" style="left:55.0px;top:595.2px;font:400 10.6px/16px 'Liberation Sans','DejaVu Sans',sans-serif;color:#707070;letter-spacing:0.602px;">24</div>
<div class="t" id="t86" style="left:117.0px;top:595.2px;font:400 10.6px/16px 'Liberation Sans','DejaVu Sans',sans-serif;color:#707070;letter-spacing:0.000px;">)</div>
<div class="t" id="t87" style="left:145.5px;top:595.2px;font:400 11.2px/16px 'DejaVu Sans Mono','Liberation Mono',monospace;color:#222;letter-spacing:0.211px;-webkit-text-stroke:0.18px;"><span style="color:#2d2080">&lt;non</span><span style="color:#222"> techerraanety&gt;</span></div>
<div class="t" id="t88" style="left:55.0px;top:611.7px;font:400 10.6px/16px 'Liberation Sans','DejaVu Sans',sans-serif;color:#707070;letter-spacing:0.602px;">25</div>
<div class="t" id="t89" style="left:145.5px;top:611.7px;font:400 11.2px/16px 'DejaVu Sans Mono','Liberation Mono',monospace;color:#222;letter-spacing:0.272px;-webkit-text-stroke:0.18px;"><span style="color:#2d2080">tve</span><span style="color:#222"> -fall </span><span style="font-family:'Liberation Sans',sans-serif;font-size:11.8px;line-height:0;color:#222">0</span><span style="color:#222"> countont&gt;</span></div>
<div class="t" id="t90" style="left:55.0px;top:628.7px;font:400 10.6px/16px 'Liberation Sans','DejaVu Sans',sans-serif;color:#707070;letter-spacing:0.602px;">25</div>
<div class="t" id="t91" style="left:145.5px;top:628.7px;font:400 11.2px/16px 'DejaVu Sans Mono','Liberation Mono',monospace;color:#222;letter-spacing:0.208px;-webkit-text-stroke:0.18px;">&lt;oent rectal pati&gt;</div>
<div class="t" id="t92" style="left:55.0px;top:644.7px;font:400 10.6px/16px 'Liberation Sans','DejaVu Sans',sans-serif;color:#707070;letter-spacing:0.602px;">20</div>
<div class="t" id="t93" style="left:145.5px;top:644.7px;font:400 11.2px/16px 'DejaVu Sans Mono','Liberation Mono',monospace;color:#222;letter-spacing:0.192px;-webkit-text-stroke:0.18px;">canent&gt;</div>
<div class="t" id="t94" style="left:55.0px;top:661.2px;font:400 10.6px/16px 'Liberation Sans','DejaVu Sans',sans-serif;color:#707070;letter-spacing:0.602px;">27</div>
<div class="t" id="t95" style="left:131.0px;top:661.2px;font:400 11.2px/16px 'DejaVu Sans Mono','Liberation Mono',monospace;color:#222;letter-spacing:0.264px;-webkit-text-stroke:0.18px;"><span style="color:#2d2080">&lt;coult_cotinlatt&gt;</span></div>
<div class="t" id="t96" style="left:55.0px;top:678.2px;font:400 10.6px/16px 'Liberation Sans','DejaVu Sans',sans-serif;color:#707070;letter-spacing:0.602px;">28</div>
<div class="t" id="t97" style="left:111.0px;top:678.2px;font:400 11.2px/16px 'DejaVu Sans Mono','Liberation Mono',monospace;color:#222;letter-spacing:0.448px;-webkit-text-stroke:0.18px;"><span style="color:#2d2080">terrigginnsa</span><span style="color:#222"> prowe&gt;</span></div>
<div class="t" id="t98" style="left:55.0px;top:695.7px;font:400 10.6px/16px 'Liberation Sans','DejaVu Sans',sans-serif;color:#707070;letter-spacing:0.602px;">29</div>
<div class="t" id="t99" style="left:92.5px;top:695.7px;font:400 11.2px/16px 'DejaVu Sans Mono','Liberation Mono',monospace;color:#222;letter-spacing:0.049px;-webkit-text-stroke:0.18px;"><span style="color:#2d2080">petive&gt;</span></div>
<div class="t" id="t100" style="left:55.0px;top:711.7px;font:400 10.6px/16px 'Liberation Sans','DejaVu Sans',sans-serif;color:#8a8a8a;letter-spacing:0.602px;">29</div>
<div class="t" id="t101" style="left:88.5px;top:711.7px;font:400 11.2px/16px 'DejaVu Sans Mono','Liberation Mono',monospace;color:#8a8a8a;letter-spacing:0.000px;-webkit-text-stroke:0.18px;">&gt;</div>
<div class="t" id="t102" style="left:729.6px;top:182.0px;font:400 10.4px/16px 'Liberation Sans','DejaVu Sans',sans-serif;color:#484848;letter-spacing:2.000px;">46</div>
<div class="t" id="t103" style="left:729.6px;top:195.3px;font:400 10.4px/16px 'Liberation Sans','DejaVu Sans',sans-serif;color:#484848;letter-spacing:2.000px;">45</div>
<div class="t" id="t104" style="left:729.6px;top:208.7px;font:400 10.4px/16px 'Liberation Sans','DejaVu Sans',sans-serif;color:#484848;letter-spacing:2.000px;">45</div>
<div class="t" id="t105" style="left:728.4px;top:221.3px;font:400 10.4px/16px 'Liberation Sans','DejaVu Sans',sans-serif;color:#484848;letter-spacing:-0.326px;">110</div>
<div class="t" id="t106" style="left:728.4px;top:234.3px;font:400 10.4px/16px 'Liberation Sans','DejaVu Sans',sans-serif;color:#484848;letter-spacing:-0.326px;">115</div>
<div class="t" id="t107" style="left:728.4px;top:247.3px;font:400 10.4px/16px 'Liberation Sans','DejaVu Sans',sans-serif;color:#484848;letter-spacing:-0.326px;">110</div>
<div class="t" id="t108" style="left:728.4px;top:260.3px;font:400 10.4px/16px 'Liberation Sans','DejaVu Sans',sans-serif;color:#484848;letter-spacing:-0.581px;">145</div>
<div class="t" id="t109" style="left:728.4px;top:273.3px;font:400 10.4px/16px 'Liberation Sans','DejaVu Sans',sans-serif;color:#484848;letter-spacing:-0.581px;">106</div>
<div class="t" id="t110" style="left:728.4px;top:286.3px;font:400 10.4px/16px 'Liberation Sans','DejaVu Sans',sans-serif;color:#484848;letter-spacing:-0.581px;">125</div>
<div class="t" id="t111" style="left:728.4px;top:299.5px;font:400 10.4px/16px 'Liberation Sans','DejaVu Sans',sans-serif;color:#484848;letter-spacing:-0.581px;">186</div>
<div class="t" id="t112" style="left:728.4px;top:312.5px;font:400 10.4px/16px 'Liberation Sans','DejaVu Sans',sans-serif;color:#484848;letter-spacing:-0.581px;">157</div>
<div class="t" id="t113" style="left:728.4px;top:326.0px;font:400 10.4px/16px 'Liberation Sans','DejaVu Sans',sans-serif;color:#484848;letter-spacing:-0.581px;">120</div>
<div class="t" id="t114" style="left:728.4px;top:340.3px;font:400 10.4px/16px 'Liberation Sans','DejaVu Sans',sans-serif;color:#484848;letter-spacing:-0.581px;">145</div>
<div class="t" id="t115" style="left:728.4px;top:353.7px;font:400 10.4px/16px 'Liberation Sans','DejaVu Sans',sans-serif;color:#484848;letter-spacing:-0.581px;">137</div>
<div class="t" id="t116" style="left:728.4px;top:366.7px;font:400 10.4px/16px 'Liberation Sans','DejaVu Sans',sans-serif;color:#484848;letter-spacing:-0.581px;">427</div>
<div class="t" id="t117" style="left:728.4px;top:380.7px;font:400 10.4px/16px 'Liberation Sans','DejaVu Sans',sans-serif;color:#484848;letter-spacing:-0.581px;">226</div>
<div class="t" id="t118" style="left:728.4px;top:394.7px;font:400 10.4px/16px 'Liberation Sans','DejaVu Sans',sans-serif;color:#484848;letter-spacing:-0.581px;">227</div>
<div class="t" id="t119" style="left:728.4px;top:408.7px;font:400 10.4px/16px 'Liberation Sans','DejaVu Sans',sans-serif;color:#484848;letter-spacing:-0.581px;">237</div>
<div class="t" id="t120" style="left:728.4px;top:422.3px;font:400 10.4px/16px 'Liberation Sans','DejaVu Sans',sans-serif;color:#484848;letter-spacing:-0.581px;">220</div>
<div class="t" id="t121" style="left:728.4px;top:436.3px;font:400 10.4px/16px 'Liberation Sans','DejaVu Sans',sans-serif;color:#484848;letter-spacing:-0.581px;">405</div>
<div class="t" id="t122" style="left:728.4px;top:451.0px;font:400 10.4px/16px 'Liberation Sans','DejaVu Sans',sans-serif;color:#484848;letter-spacing:-0.581px;">235</div>
<div class="t" id="t123" style="left:728.4px;top:465.0px;font:400 10.4px/16px 'Liberation Sans','DejaVu Sans',sans-serif;color:#484848;letter-spacing:-0.581px;">336</div>
<div class="t" id="t124" style="left:728.4px;top:478.7px;font:400 10.4px/16px 'Liberation Sans','DejaVu Sans',sans-serif;color:#484848;letter-spacing:-0.581px;">475</div>
<div class="t" id="t125" style="left:728.4px;top:492.3px;font:400 10.4px/16px 'Liberation Sans','DejaVu Sans',sans-serif;color:#484848;letter-spacing:-0.581px;">498</div>
<div class="t" id="t126" style="left:728.4px;top:505.7px;font:400 10.4px/16px 'Liberation Sans','DejaVu Sans',sans-serif;color:#484848;letter-spacing:-0.581px;">270</div>
<div class="t" id="t127" style="left:728.4px;top:519.1px;font:400 10.4px/16px 'Liberation Sans','DejaVu Sans',sans-serif;color:#484848;letter-spacing:-0.581px;">290</div>
<div class="t" id="t128" style="left:728.4px;top:532.5px;font:400 10.4px/16px 'Liberation Sans','DejaVu Sans',sans-serif;color:#484848;letter-spacing:-0.581px;">235</div>
<div class="t" id="t129" style="left:728.4px;top:546.0px;font:400 10.4px/16px 'Liberation Sans','DejaVu Sans',sans-serif;color:#484848;letter-spacing:-0.581px;">316</div>
<div class="t" id="t130" style="left:728.4px;top:560.4px;font:400 10.4px/16px 'Liberation Sans','DejaVu Sans',sans-serif;color:#484848;letter-spacing:-0.581px;">498</div>
<div class="t" id="t131" style="left:728.4px;top:573.3px;font:400 10.4px/16px 'Liberation Sans','DejaVu Sans',sans-serif;color:#484848;letter-spacing:-0.581px;">385</div>
<div class="t" id="t132" style="left:728.4px;top:586.9px;font:400 10.4px/16px 'Liberation Sans','DejaVu Sans',sans-serif;color:#484848;letter-spacing:-0.581px;">210</div>
<div class="t" id="t133" style="left:728.4px;top:600.5px;font:400 10.4px/16px 'Liberation Sans','DejaVu Sans',sans-serif;color:#484848;letter-spacing:-0.581px;">290</div>
<div class="t" id="t134" style="left:728.4px;top:614.5px;font:400 10.4px/16px 'Liberation Sans','DejaVu Sans',sans-serif;color:#484848;letter-spacing:-0.581px;">220</div>
<div class="t" id="t135" style="left:728.4px;top:628.4px;font:400 10.4px/16px 'Liberation Sans','DejaVu Sans',sans-serif;color:#484848;letter-spacing:-0.581px;">206</div>
<div class="t" id="t136" style="left:728.4px;top:642.7px;font:400 10.4px/16px 'Liberation Sans','DejaVu Sans',sans-serif;color:#484848;letter-spacing:-0.581px;">234</div>
<div class="t" id="t137" style="left:777.9px;top:182.7px;font:400 9.2px/16px 'Liberation Sans','DejaVu Sans',sans-serif;color:#777;letter-spacing:0.000px;">1</div>
<div class="t" id="t138" style="left:777.9px;top:196.3px;font:400 9.2px/16px 'Liberation Sans','DejaVu Sans',sans-serif;color:#777;letter-spacing:0.000px;">5</div>
<div class="t" id="t139" style="left:777.9px;top:210.6px;font:400 9.2px/16px 'Liberation Sans','DejaVu Sans',sans-serif;color:#777;letter-spacing:0.000px;">6</div>
<div class="t" id="t140" style="left:777.9px;top:223.7px;font:400 9.2px/16px 'Liberation Sans','DejaVu Sans',sans-serif;color:#777;letter-spacing:0.000px;">7</div>
<div class="t" id="t141" style="left:777.9px;top:236.8px;font:400 9.2px/16px 'Liberation Sans','DejaVu Sans',sans-serif;color:#777;letter-spacing:0.000px;">6</div>
<div class="t" id="t142" style="left:777.9px;top:248.4px;font:400 9.2px/16px 'Liberation Sans','DejaVu Sans',sans-serif;color:#777;letter-spacing:0.000px;">0</div>
<div class="t" id="t143" style="left:777.9px;top:259.7px;font:400 9.2px/16px 'Liberation Sans','DejaVu Sans',sans-serif;color:#777;letter-spacing:0.000px;">9</div>
<div class="t" id="t144" style="left:777.9px;top:272.7px;font:400 9.2px/16px 'Liberation Sans','DejaVu Sans',sans-serif;color:#777;letter-spacing:0.000px;">6</div>
<div class="t" id="t145" style="left:777.9px;top:285.7px;font:400 9.2px/16px 'Liberation Sans','DejaVu Sans',sans-serif;color:#777;letter-spacing:0.000px;">7</div>
<div class="t" id="t146" style="left:777.9px;top:298.7px;font:400 9.2px/16px 'Liberation Sans','DejaVu Sans',sans-serif;color:#777;letter-spacing:0.000px;">7</div>
<div class="t" id="t147" style="left:777.9px;top:311.5px;font:400 9.2px/16px 'Liberation Sans','DejaVu Sans',sans-serif;color:#777;letter-spacing:0.000px;">0</div>
<div class="t" id="t148" style="left:772.5px;top:325.4px;font:400 9.2px/16px 'Liberation Sans','DejaVu Sans',sans-serif;color:#777;letter-spacing:0.283px;">10</div>
<div class="t" id="t149" style="left:777.9px;top:339.7px;font:400 9.2px/16px 'Liberation Sans','DejaVu Sans',sans-serif;color:#777;letter-spacing:0.000px;">8</div>
<div class="t" id="t150" style="left:772.5px;top:352.4px;font:400 9.2px/16px 'Liberation Sans','DejaVu Sans',sans-serif;color:#777;letter-spacing:0.627px;">11</div>
<div class="t" id="t151" style="left:772.5px;top:365.4px;font:400 9.2px/16px 'Liberation Sans','DejaVu Sans',sans-serif;color:#777;letter-spacing:0.283px;">16</div>
<div class="t" id="t152" style="left:772.5px;top:378.7px;font:400 9.2px/16px 'Liberation Sans','DejaVu Sans',sans-serif;color:#777;letter-spacing:0.283px;">15</div>
<div class="t" id="t153" style="left:772.5px;top:391.4px;font:400 9.2px/16px 'Liberation Sans','DejaVu Sans',sans-serif;color:#777;letter-spacing:0.283px;">19</div>
<div class="t" id="t154" style="left:772.5px;top:404.7px;font:400 9.2px/16px 'Liberation Sans','DejaVu Sans',sans-serif;color:#777;letter-spacing:0.283px;">13</div>
<div class="t" id="t155" style="left:772.5px;top:417.1px;font:400 9.2px/16px 'Liberation Sans','DejaVu Sans',sans-serif;color:#777;letter-spacing:0.283px;">29</div>
<div class="t" id="t156" style="left:772.5px;top:429.1px;font:400 9.2px/16px 'Liberation Sans','DejaVu Sans',sans-serif;color:#777;letter-spacing:0.283px;">19</div>
<div class="t" id="t157" style="left:772.5px;top:441.4px;font:400 9.2px/16px 'Liberation Sans','DejaVu Sans',sans-serif;color:#777;letter-spacing:0.283px;">19</div>
<div class="t" id="t158" style="left:772.5px;top:454.1px;font:400 9.2px/16px 'Liberation Sans','DejaVu Sans',sans-serif;color:#777;letter-spacing:0.283px;">21</div>
<div class="t" id="t159" style="left:772.5px;top:465.7px;font:400 9.2px/16px 'Liberation Sans','DejaVu Sans',sans-serif;color:#777;letter-spacing:0.283px;">25</div>
<div class="t" id="t160" style="left:772.5px;top:478.7px;font:400 9.2px/16px 'Liberation Sans','DejaVu Sans',sans-serif;color:#777;letter-spacing:0.283px;">14</div>
<div class="t" id="t161" style="left:772.5px;top:492.4px;font:400 9.2px/16px 'Liberation Sans','DejaVu Sans',sans-serif;color:#777;letter-spacing:0.283px;">23</div>
<div class="t" id="t162" style="left:797.0px;top:195.7px;font:400 10.6px/16px 'DejaVu Sans Mono','Liberation Mono',monospace;color:#222;letter-spacing:0.000px;-webkit-text-stroke:0.15px;">(</div>
<div class="t" id="t163" style="left:809.0px;top:209.4px;font:400 10.6px/16px 'DejaVu Sans Mono','Liberation Mono',monospace;color:#222;letter-spacing:-0.441px;-webkit-text-stroke:0.15px;">&lt;allec{(S &lt;elle&gt;</div>
<div class="t" id="t164" style="left:808.0px;top:225.0px;font:400 10.6px/16px 'DejaVu Sans Mono','Liberation Mono',monospace;color:#222;letter-spacing:0.000px;-webkit-text-stroke:0.15px;">(</div>
<div class="t" id="t165" style="left:825.5px;top:245.0px;font:400 10.6px/16px 'DejaVu Sans Mono','Liberation Mono',monospace;color:#222;letter-spacing:0.129px;-webkit-text-stroke:0.15px;">crent_AWord&gt;</div>
<div class="t" id="t166" style="left:825.5px;top:272.7px;font:400 10.6px/16px 'DejaVu Sans Mono','Liberation Mono',monospace;color:#222;letter-spacing:0.344px;-webkit-text-stroke:0.15px;">poductio&gt;</div>
<div class="t" id="t167" style="left:825.0px;top:310.9px;font:400 10.6px/16px 'DejaVu Sans Mono','Liberation Mono',monospace;color:#222;letter-spacing:0.160px;-webkit-text-stroke:0.15px;">corcet master</div>
<div class="t" id="t168" style="left:826.0px;top:325.0px;font:400 10.6px/16px 'DejaVu Sans Mono','Liberation Mono',monospace;color:#222;letter-spacing:0.000px;-webkit-text-stroke:0.15px;">)</div>
<div class="t" id="t169" style="left:826.0px;top:339.4px;font:400 10.6px/16px 'DejaVu Sans Mono','Liberation Mono',monospace;color:#222;letter-spacing:0.160px;-webkit-text-stroke:0.15px;">&gt; cole coocd&gt;</div>
<div class="t" id="t170" style="left:841.0px;top:364.0px;font:400 10.6px/16px 'DejaVu Sans Mono','Liberation Mono',monospace;color:#222;letter-spacing:-0.178px;-webkit-text-stroke:0.15px;">busidroess</div>
<div class="t" id="t171" style="left:842.0px;top:377.4px;font:400 10.6px/16px 'DejaVu Sans Mono','Liberation Mono',monospace;color:#222;letter-spacing:0.000px;-webkit-text-stroke:0.15px;">)</div>
<div class="t" id="t172" style="left:842.0px;top:390.7px;font:400 10.6px/16px 'DejaVu Sans Mono','Liberation Mono',monospace;color:#222;letter-spacing:-0.278px;-webkit-text-stroke:0.15px;">&lt;pesil for</div>
<div class="t" id="t173" style="left:842.0px;top:404.4px;font:400 10.6px/16px 'DejaVu Sans Mono','Liberation Mono',monospace;color:#222;letter-spacing:0.391px;-webkit-text-stroke:0.15px;">tnmpratcheigh</div>
<div class="t" id="t174" style="left:842.0px;top:416.7px;font:400 10.6px/16px 'DejaVu Sans Mono','Liberation Mono',monospace;color:#222;letter-spacing:-0.178px;-webkit-text-stroke:0.15px;">&lt;onar</div>
<div class="t" id="t175" style="left:842.0px;top:428.4px;font:400 10.6px/16px 'DejaVu Sans Mono','Liberation Mono',monospace;color:#222;letter-spacing:0.121px;-webkit-text-stroke:0.15px;">&lt;ped</div>
<div class="t" id="t176" style="left:842.0px;top:440.7px;font:400 10.6px/16px 'DejaVu Sans Mono','Liberation Mono',monospace;color:#222;letter-spacing:-0.156px;-webkit-text-stroke:0.15px;">&lt;olarnme&gt;</div>
<div class="t" id="t177" style="left:842.0px;top:466.4px;font:400 10.6px/16px 'DejaVu Sans Mono','Liberation Mono',monospace;color:#222;letter-spacing:-0.379px;-webkit-text-stroke:0.15px;">cener retjopt</div>
<div class="t" id="t178" style="left:842.0px;top:479.0px;font:400 10.6px/16px 'DejaVu Sans Mono','Liberation Mono',monospace;color:#222;letter-spacing:0.399px;-webkit-text-stroke:0.15px;">if femory</div>
<div class="t" id="t179" style="left:842.0px;top:492.7px;font:400 10.6px/16px 'DejaVu Sans Mono','Liberation Mono',monospace;color:#222;letter-spacing:-0.345px;-webkit-text-stroke:0.15px;">&lt;uibpratt. def&gt;</div>
</div>
</body></html>
